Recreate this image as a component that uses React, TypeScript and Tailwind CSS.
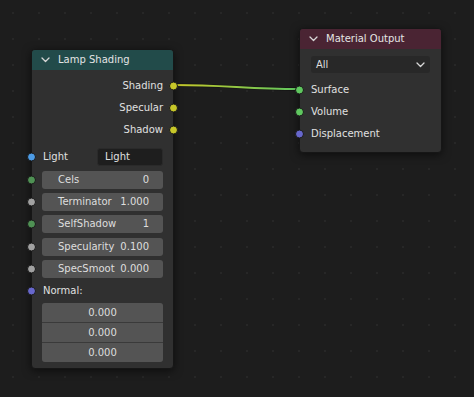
import React from "react";

const font = { fontFamily: '"DejaVu Sans", "Liberation Sans", sans-serif' };

function Socket({ color, side }: { color: string; side: "left" | "right" }) {
  return (
    <span
      className={`absolute top-1/2 h-[9px] w-[9px] -translate-y-1/2 rounded-full border border-[#1a1a1a] ${
        side === "left" ? "left-[-5px]" : "right-[-5px]"
      }`}
      style={{ backgroundColor: color }}
    />
  );
}

function Chevron({ className = "" }: { className?: string }) {
  return (
    <svg width="9" height="6" viewBox="0 0 9 6" className={className}>
      <path d="M1 1 L4.5 4.5 L8 1" fill="none" stroke="#d8d8d8" strokeWidth="1.3" strokeLinecap="round" strokeLinejoin="round" />
    </svg>
  );
}

function OutRow({ label, color }: { label: string; color: string }) {
  return (
    <div className="relative flex h-[22px] items-center justify-end pr-[10px] text-[#e0e0e0]">
      {label}
      <Socket color={color} side="right" />
    </div>
  );
}

function NumRow({ label, value, color }: { label: string; value: string; color: string }) {
  return (
    <div className="relative flex h-[22.4px] items-center px-[10px]">
      <Socket color={color} side="left" />
      <div className="flex h-[18px] w-full items-center justify-between rounded-[3px] bg-[#545454] pl-[16px] pr-[14px] text-[#dedede]">
        <span>{label}</span>
        <span>{value}</span>
      </div>
    </div>
  );
}

function InRow({ label, color }: { label: string; color: string }) {
  return (
    <div className="relative flex h-[22px] items-center pl-[11px] text-[#e0e0e0]">
      <Socket color={color} side="left" />
      {label}
    </div>
  );
}

export default function App() {
  return (
    <div
      className="relative h-[397px] w-[474px] overflow-hidden bg-[#1d1d1d] bg-[radial-gradient(circle,#272727_0.8px,transparent_1px)] bg-[length:26px_26px] text-[10px] leading-none"
      style={font}
    >
      {/* link */}
      <svg className="absolute left-0 top-0" width="474" height="397">
        <defs>
          <linearGradient id="lnk" x1="174" y1="0" x2="299" y2="0" gradientUnits="userSpaceOnUse">
            <stop offset="0" stopColor="#c7c729" />
            <stop offset="1" stopColor="#5fc75f" />
          </linearGradient>
        </defs>
        <path d="M174 85 C 225 85, 248 89, 299 89" fill="none" stroke="#111" strokeWidth="3.5" strokeOpacity="0.6" />
        <path d="M174 85 C 225 85, 248 89, 299 89" fill="none" stroke="url(#lnk)" strokeWidth="2" />
      </svg>

      {/* Lamp Shading node */}
      <div className="absolute left-[31px] top-[49px] w-[143px] rounded-[4px] border border-[#161616] bg-[#303030] shadow-[0_2px_8px_rgba(0,0,0,0.55)]">
        <div className="flex h-[20px] items-center gap-[8px] rounded-t-[3px] bg-[#224b4a] pl-[9px] text-[#e4e4e4]">
          <Chevron />
          <span>Lamp Shading</span>
        </div>
        <div className="pt-[5px]">
          <OutRow label="Shading" color="#c7c729" />
          <OutRow label="Specular" color="#c7c729" />
          <OutRow label="Shadow" color="#c7c729" />
        </div>
        <div className="pt-[5px]">
          <div className="relative flex h-[22.4px] items-center pl-[11px] pr-[10px] text-[#e0e0e0]">
            <Socket color="#4d9ce6" side="left" />
            <span className="flex-1">Light</span>
            <div className="flex h-[18px] w-[66px] items-center rounded-[3px] border border-[#2a2a2a] bg-[#1e1e1e] pl-[7px]">
              Light
            </div>
          </div>
          <NumRow label="Cels" value="0" color="#4f9154" />
          <NumRow label="Terminator" value="1.000" color="#a1a1a1" />
          <NumRow label="SelfShadow" value="1" color="#4f9154" />
          <NumRow label="Specularity" value="0.100" color="#a1a1a1" />
          <NumRow label="SpecSmoot" value="0.000" color="#a1a1a1" />
          <InRow label="Normal:" color="#6767cc" />
          <div className="mx-[10px] mb-[6px] mt-[1px] flex flex-col gap-[1px] overflow-hidden rounded-[3px] bg-[#3a3a3a] text-[#dedede]">
            <div className="flex h-[19px] items-center justify-center bg-[#545454]">0.000</div>
            <div className="flex h-[19px] items-center justify-center bg-[#545454]">0.000</div>
            <div className="flex h-[19px] items-center justify-center bg-[#545454]">0.000</div>
          </div>
        </div>
      </div>

      {/* Material Output node */}
      <div className="absolute left-[299px] top-[28px] w-[143px] rounded-[4px] border border-[#161616] bg-[#303030] shadow-[0_2px_8px_rgba(0,0,0,0.55)]">
        <div className="flex h-[20px] items-center gap-[8px] rounded-t-[3px] bg-[#4a2433] pl-[9px] text-[#e4e4e4]">
          <Chevron />
          <span>Material Output</span>
        </div>
        <div className="px-[11px] pt-[7px]">
          <div className="flex h-[17px] items-center justify-between rounded-[3px] bg-[#282828] pl-[5px] pr-[5px] text-[#dedede]">
            <span>All</span>
            <Chevron />
          </div>
        </div>
        <div className="pb-[7px] pt-[6px]">
          <InRow label="Surface" color="#5fc75f" />
          <InRow label="Volume" color="#5fc75f" />
          <InRow label="Displacement" color="#6767cc" />
        </div>
      </div>
    </div>
  );
}
